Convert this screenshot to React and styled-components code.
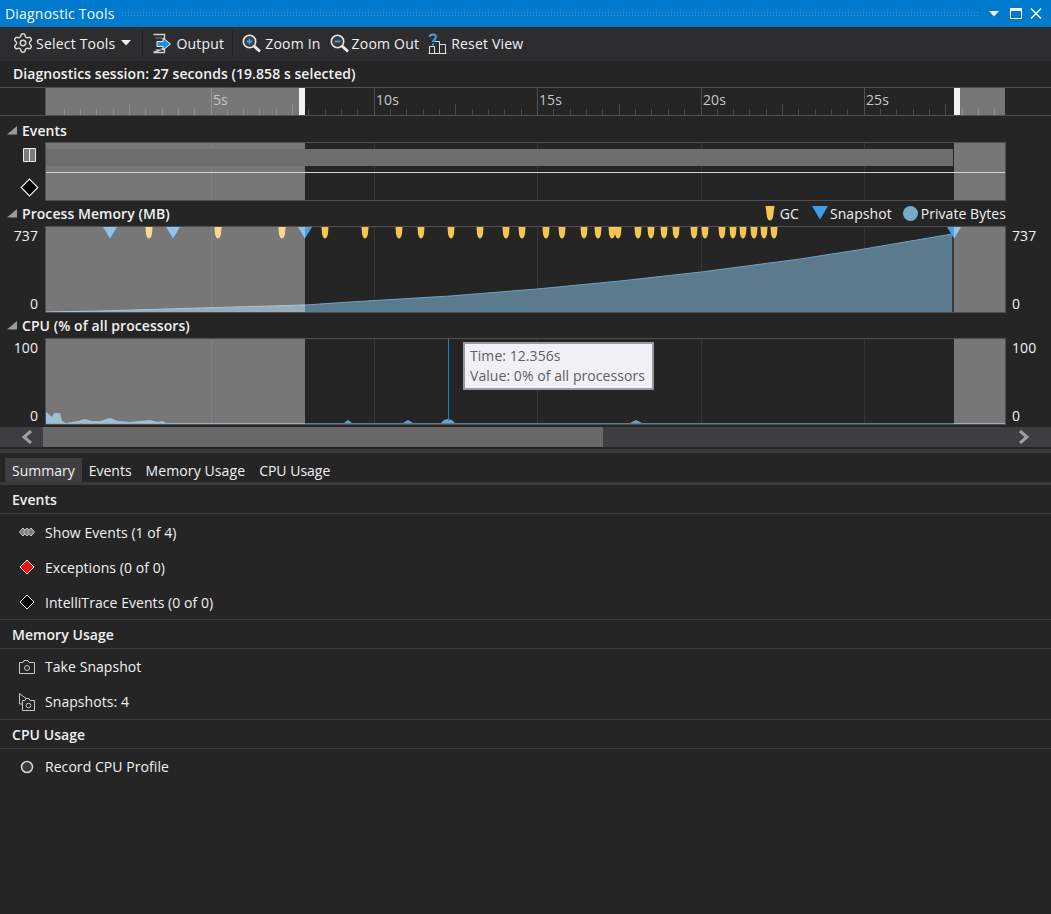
import React from 'react';
import styled, { createGlobalStyle } from 'styled-components';
import { Settings } from 'lucide-react';

const FONT = '"Open Sans", "Noto Sans", sans-serif';
const majors = [211.5, 374.5, 537.5, 701.5, 864.5];
const gcMarks = [149, 218, 282, 325, 365, 399, 421, 451, 480, 506, 522, 546, 562, 584, 598, 612, 618, 638, 651, 664, 676, 694, 705, 722, 733, 743, 754, 764, 774];
const snapMarks = [110, 173, 305, 954];

const GlobalStyle = createGlobalStyle`
  html, body { margin: 0; padding: 0; background: #252526; }
  body { font-family: ${FONT}; font-size: 14px; color: #f1f1f1; letter-spacing: 0.06px; }
`;

const Window = styled.div`
  width: 1051px;
  height: 914px;
  overflow: hidden;
  background: #252526;
`;

const TitleBar = styled.div`
  height: 27px;
  background: #007acc;
  display: flex;
  align-items: center;
  padding: 0 9px 0 5px;
  color: #f4f9fd;
  letter-spacing: 0.2px;
`;

const Grip = styled.div`
  flex: 1;
  height: 6px;
  margin: 0 11px 0 6px;
  background-image: radial-gradient(#3a9ad9 0.8px, transparent 1px);
  background-size: 3px 3px;
`;

const TitleButtons = styled.div`
  display: flex;
  align-items: center;
  gap: 8px;
`;

const MenuCaret = styled.span`
  display: flex;
  margin-left: ${p => p.$before}px;
  margin-right: ${p => p.$after || 0}px;
`;

const Toolbar = styled.div`
  height: 34px;
  box-sizing: border-box;
  background: #2d2d30;
  display: flex;
  align-items: center;
  padding: 0 0 2px 13px;
  letter-spacing: 0.2px;
`;

const ToolButton = styled.div`
  display: flex;
  align-items: center;
  gap: ${p => p.$gap || 4}px;
  margin-right: ${p => p.$after || 0}px;
  white-space: nowrap;
`;

const GearIcon = styled(Settings)`
  margin: 0 -1.5px;
  flex: none;
`;

const ToolSep = styled.div`
  width: 1px;
  height: 27px;
  background: #222224;
  margin-right: ${p => p.$after}px;
`;

const SessionRow = styled.div`
  height: 26px;
  box-sizing: border-box;
  padding: 0 0 2px 13px;
  display: flex;
  align-items: center;
  font-weight: 600;
`;

const ChartRow = styled.div`
  display: grid;
  grid-template-columns: 45px 961px 45px;
  height: ${p => p.$height}px;
`;

const RulerRow = styled(ChartRow)`
  box-sizing: border-box;
  border-top: 1px solid #505052;
  border-bottom: 1px solid #505052;
`;

const Frame = styled.div`
  position: relative;
  border: 1px solid #505052;
  background: #252526;
`;

const Plot = styled.svg`
  display: block;
  width: 100%;
  height: 100%;
`;

const TickLabel = styled.text`
  font-family: ${FONT};
  font-size: 14px;
  fill: #c8c8c8;
`;

const TrackHeader = styled.div`
  height: ${p => p.$height}px;
  box-sizing: border-box;
  display: flex;
  align-items: center;
  padding: ${p => Math.max(p.$shift, 0)}px 45px ${p => Math.max(-p.$shift, 0)}px 7px;
  gap: 4px;
`;

const TrackTitle = styled.span`
  font-weight: 600;
  flex: 1;
`;

const Legend = styled.div`
  display: flex;
  align-items: center;
`;

const LegendItem = styled.div`
  display: flex;
  align-items: center;
  gap: ${p => p.$gap}px;
  margin-left: ${p => p.$before || 0}px;
`;

const AxisColumn = styled.div`
  display: flex;
  flex-direction: column;
  justify-content: space-between;
  align-items: ${p => (p.$right ? 'flex-start' : 'flex-end')};
  padding: 1px ${p => (p.$right ? 0 : 7)}px 0 ${p => (p.$right ? 6 : 0)}px;
  height: 100%;
  box-sizing: border-box;
  line-height: 18px;
`;

const IconColumn = styled.div`
  display: flex;
  flex-direction: column;
  justify-content: space-between;
  align-items: center;
  padding: 6px 7px 4px 20px;
`;

const Tooltip = styled.div`
  position: absolute;
  left: 417px;
  top: 3px;
  width: 191px;
  height: 48px;
  box-sizing: border-box;
  border: 2px solid #9a9a9e;
  background: #f0f0f7;
  color: #5f5f5f;
  padding: 2px 5px;
  line-height: 20px;
  white-space: nowrap;
`;

const ScrollBar = styled.div`
  margin-top: 2px;
  height: 20px;
  background: #3e3e42;
  display: flex;
  align-items: center;
  justify-content: space-between;
  position: relative;
  padding: 0 21px;
`;

const ScrollThumb = styled.div`
  position: absolute;
  left: 43px;
  top: 0;
  bottom: 0;
  width: 560px;
  background: #686868;
`;

const Splitter = styled.div`
  height: 4px;
  margin-top: 2px;
  background: #3a3a3d;
`;

const TabStrip = styled.div`
  display: flex;
  align-items: stretch;
  height: 24px;
  margin-top: 5px;
  padding-left: 5px;
  border-bottom: 3px solid #3a3a3d;
  letter-spacing: 0;
`;

const Tab = styled.div`
  padding: 0 7px;
  display: flex;
  align-items: center;
  background: ${p => (p.$active ? '#3e3e40' : 'transparent')};
  letter-spacing: ${p => p.$track || 0}px;
`;

const SectionHeader = styled.div`
  height: 29px;
  display: flex;
  align-items: center;
  padding-left: 12px;
  font-weight: 600;
  box-sizing: border-box;
  border-bottom: 1px solid #3f3f42;
`;

const ActionRow = styled.div`
  height: 35px;
  box-sizing: border-box;
  padding: ${p => (p.$low ? 1 : 0)}px 0 0 19px;
  display: flex;
  align-items: center;
  gap: 10px;
`;

const ActionList = styled.div`
  border-bottom: ${p => (p.$last ? 'none' : '1px solid #3f3f42')};
`;

const IconBox = styled.svg`
  flex: none;
  display: block;
`;

const Caret = () => (
  <IconBox width="11" height="9" viewBox="0 0 11 9">
    <path d="M0 8.5 L10 0 V8.5 Z" fill="#9a9a9a" />
  </IconBox>
);

const DropArrow = () => (
  <IconBox width="10" height="6" viewBox="0 0 10 6">
    <path d="M0 0 H10 L5 5.5 Z" fill="#f1f1f1" />
  </IconBox>
);

const MaximizeIcon = () => (
  <IconBox width="12" height="11" viewBox="0 0 12 11">
    <path d="M.5 .5 H11.5 V10.5 H.5 Z" fill="none" stroke="#fff" />
    <rect x="0" y="0" width="12" height="3" fill="#fff" />
  </IconBox>
);

const CloseIcon = () => (
  <IconBox width="12" height="11" viewBox="0 0 12 11">
    <path d="M1 .5 L11 10.5 M11 .5 L1 10.5" stroke="#fff" strokeWidth="1.4" />
  </IconBox>
);

const OutputIcon = () => (
  <IconBox width="20" height="21" viewBox="0 0 20 21">
    <path d="M1.5 1.5 H12.5 V7 M12.5 15 V19.5 H1.5 Z" fill="#2d2d30" stroke="#d0d0d0" strokeWidth="1.4" />
    <path d="M3.5 5 H10 M3.5 16.5 H10" stroke="#8a8a8a" />
    <path d="M5 8.5 H11 V5 L18.5 11 L11 17 V13.5 H5 Z" fill="#1d8fdc" stroke="#f1f1f1" strokeWidth="1" />
  </IconBox>
);

const Magnifier = ({ minus }) => (
  <IconBox width="20" height="19" viewBox="0 0 20 19">
    <circle cx="7.5" cy="7.5" r="6.2" fill="#3b3b3e" stroke="#e8e8e8" strokeWidth="1.6" />
    <path d="M12 12 L18 17.5" stroke="#e8e8e8" strokeWidth="3" />
    <path d={minus ? 'M4.5 7.5 H10.5' : 'M4.5 7.5 H10.5 M7.5 4.5 V10.5'} stroke="#3f9ee0" strokeWidth="1.8" />
  </IconBox>
);

const ResetIcon = () => (
  <IconBox width="19" height="21" viewBox="0 0 19 21">
    <path d="M1.5 4 C2 0.5 8 0.5 8 4 C8 6.5 5 6.5 5 9" fill="none" stroke="#3f9ee0" strokeWidth="2" />
    <rect x="4" y="10.5" width="2" height="2" fill="#3f9ee0" />
    <path d="M1.5 20.5 V13.5 H6.5 V20.5 M6.5 8.5 H11.5 V20.5 M11.5 11.5 H17.5 V20.5 M.5 20.5 H18.5" fill="none" stroke="#e0e0e0" />
  </IconBox>
);

const PauseIcon = () => (
  <IconBox width="13" height="14" viewBox="0 0 13 14">
    <path d="M.5 .5 H12.5 V13.5 H.5 Z" fill="#7c7c7c" stroke="#eee" />
    <path d="M6.5 1 V13" stroke="#eee" />
  </IconBox>
);

const DiamondIcon = ({ size = 16, fill = '#000', line = 1 }) => (
  <IconBox width={size} height={size} viewBox="0 0 16 16">
    <path d="M8 1 L15 8 L8 15 L1 8 Z" fill={fill} stroke="#f0f0f0" strokeWidth={line} />
  </IconBox>
);

const ShowEventsIcon = () => (
  <IconBox width="16" height="16" viewBox="0 0 16 16">
    {[4, 8, 12].map(x => (
      <path key={x} d={`M${x} 4 L${x + 3.5} 8 L${x} 12 L${x - 3.5} 8 Z`} fill="#777" stroke="#cfcfcf" strokeWidth="1" />
    ))}
  </IconBox>
);

const CameraIcon = () => (
  <IconBox width="16" height="16" viewBox="0 0 16 16">
    <path d="M.5 3.5 H4 L5 1.5 H9 L10 3.5 H15.5 V14.5 H.5 Z" fill="none" stroke="#c8c8c8" />
    <circle cx="8" cy="9" r="2.5" fill="none" stroke="#c8c8c8" />
  </IconBox>
);

const SnapshotsIcon = () => (
  <IconBox width="16" height="18" viewBox="0 0 16 18">
    <path d="M.5 11 V.5 L7 5.5 M.5 11 H3" fill="none" stroke="#c8c8c8" />
    <path d="M3.5 7.5 H6 L7 5.5 H10 L11 7.5 H15.5 V17.5 H3.5 Z" fill="#252526" stroke="#c8c8c8" />
    <circle cx="9.5" cy="12.5" r="2.3" fill="none" stroke="#c8c8c8" />
  </IconBox>
);

const RecordIcon = () => (
  <IconBox width="16" height="16" viewBox="0 0 16 16">
    <circle cx="8" cy="8" r="5.5" fill="#3a3a3a" stroke="#d0d0d0" strokeWidth="1.6" />
  </IconBox>
);

const gcPath = x => `M${x - 3.5} 227 H${x + 3.5} L${x + 3} 234 Q${x + 1.8} 238.5 ${x} 238.5 Q${x - 1.8} 238.5 ${x - 3} 234 Z`;

const GcLegend = () => (
  <IconBox width="10" height="16" viewBox="0 0 10 16">
    <path d="M.5 1 H9.5 L8 12 Q7 15.5 5 15.5 Q3 15.5 2 12 Z" fill="#f6c453" />
  </IconBox>
);

const SnapshotLegend = () => (
  <IconBox width="16" height="14" viewBox="0 0 16 14">
    <path d="M0 0 H16 L8 13.5 Z" fill="#3f9eea" />
  </IconBox>
);

const BytesLegend = () => (
  <IconBox width="15" height="15" viewBox="0 0 15 15">
    <circle cx="7.5" cy="7.5" r="7.5" fill="#75abc9" />
  </IconBox>
);

// faint vertical grid shared by the three tracks
const GridLines = ({ top, bottom }) => majors.map(x => (
  <line key={x} x1={x} x2={x} y1={top} y2={bottom} stroke="#35353a" />
));

// grey bands outside of the selected range
const Shades = ({ top, bottom }) => (
  <>
    <rect x="46" y={top} width="259" height={bottom - top} fill="#fff" opacity="0.38" />
    <rect x="954" y={top} width="51" height={bottom - top} fill="#fff" opacity="0.38" />
  </>
);

const RulerPlot = () => {
  const ticks = [];
  for (let i = 0; i < 59; i++) {
    const x = Math.floor(47.7 + i * 16.33) + 0.5;
    const tall = i % 5 === 0;
    if (i % 10 !== 0) ticks.push(<line key={i} x1={x} x2={x} y1={tall ? 104 : 109} y2="115" stroke="#4a4a4c" />);
  }
  return (
    <Plot viewBox="45 88 961 27" preserveAspectRatio="none">
      {ticks}
      {majors.map(x => <line key={x} x1={x} x2={x} y1="88" y2="115" stroke="#505052" />)}
      <rect x="46" y="88" width="253" height="27" fill="#fff" opacity="0.38" />
      <rect x="960" y="88" width="45" height="27" fill="#fff" opacity="0.38" />
      <line x1="45.5" x2="45.5" y1="88" y2="115" stroke="#505052" />
      <rect x="299" y="88" width="6" height="27" fill="#f2f2f2" />
      <rect x="954" y="88" width="6" height="27" fill="#f2f2f2" />
      {majors.map((x, i) => <TickLabel key={x} x={x + 1.5} y="105">{(i + 1) * 5}s</TickLabel>)}
    </Plot>
  );
};

const EventsPlot = () => (
  <Plot viewBox="46 143 959 57" preserveAspectRatio="none">
    <GridLines top={143} bottom={200} />
    <rect x="46" y="149" width="907" height="17" fill="#6e6e6e" />
    <Shades top={143} bottom={200} />
    <rect x="46" y="149" width="259" height="17" fill="#6e6e6e" />
    <line x1="46" x2="1005" y1="172.5" y2="172.5" stroke="#d4d4d4" />
  </Plot>
);

const MemoryPlot = () => (
  <Plot viewBox="46 227 959 85" preserveAspectRatio="none">
    <GridLines top={227} bottom={312} />
    <path d="M46 312 L100 311 L200 308 L305 305 L350 302 L450 296 L537 289 L620 281 L701 272 L800 259 L864 249 L952 234 V312 Z" fill="#5b7a8e" />
    <path d="M46 312 L100 311 L200 308 L305 305 L350 302 L450 296 L537 289 L620 281 L701 272 L800 259 L864 249 L952 234" fill="none" stroke="#6fa3c2" />
    <line x1="953" x2="953" y1="234" y2="312" stroke="#38383a" strokeWidth="2" />
    {gcMarks.map(x => <path key={x} d={gcPath(x)} fill="#f6c453" />)}
    {snapMarks.map(x => <path key={x} d={`M${x - 7} 227 H${x + 7} L${x} 238.5 Z`} fill="#4aa0e6" />)}
    <Shades top={227} bottom={312} />
  </Plot>
);

const CpuPlot = () => (
  <Plot viewBox="46 339 959 85" preserveAspectRatio="none">
    <GridLines top={339} bottom={424} />
    <path
      d="M46 412 L52 417 L54 413 L60 413 L62 421 L66 423 L78 421 L85 419 L92 421 L100 421 L110 418 L118 421 L130 422 L150 420 L158 422 L162 421 L166 423 V424 H46 Z"
      fill="#6a9ab5"
    />
    <path d="M344 423 L348 420 L352 423 Z M403 423 L408 420 L413 423 Z M441 423 L444 420 L448 419 L452 420 L455 423 Z M630 423 L636 420 L642 423 Z" fill="#6aa5c4" />
    <line x1="46" x2="1005" y1="423.5" y2="423.5" stroke="#5c7f94" />
    <line x1="448.5" x2="448.5" y1="339" y2="421" stroke="#0f86d6" />
    <Shades top={339} bottom={424} />
  </Plot>
);

const ScrollArrow = ({ flip }) => (
  <IconBox width="12" height="14" viewBox="0 0 12 14">
    <path d={flip ? 'M2 1 L9 7 L2 13' : 'M10 1 L3 7 L10 13'} fill="none" stroke="#a0a0a0" strokeWidth="3" />
  </IconBox>
);

const App = () => {
  return (
    <Window>
      <GlobalStyle />
      <TitleBar>
        Diagnostic Tools
        <Grip />
        <TitleButtons>
          <MenuCaret $before={0} $after={3}><DropArrow /></MenuCaret>
          <MaximizeIcon />
          <CloseIcon />
        </TitleButtons>
      </TitleBar>

      <Toolbar>
        <ToolButton $after={11}>
          <GearIcon size={22} color="#d8d8d8" strokeWidth={1.6} />
          Select Tools
          <MenuCaret $before={2}><DropArrow /></MenuCaret>
        </ToolButton>
        <ToolSep $after={9} />
        <ToolButton $after={8}><OutputIcon />Output</ToolButton>
        <ToolSep $after={9} />
        <ToolButton $after={9} $gap={3}><Magnifier />Zoom In</ToolButton>
        <ToolButton $after={9} $gap={2}><Magnifier minus />Zoom Out</ToolButton>
        <ToolButton><ResetIcon />Reset View</ToolButton>
      </Toolbar>

      <SessionRow>Diagnostics session: 27 seconds (19.858 s selected)</SessionRow>

      <RulerRow $height={29}>
        <div />
        <RulerPlot />
        <div />
      </RulerRow>

      <TrackHeader $height={26} $shift={3}>
        <Caret />
        <TrackTitle>Events</TrackTitle>
      </TrackHeader>
      <ChartRow $height={59}>
        <IconColumn>
          <PauseIcon />
          <DiamondIcon size={19} />
        </IconColumn>
        <Frame><EventsPlot /></Frame>
        <div />
      </ChartRow>

      <TrackHeader $height={25} $shift={-1}>
        <Caret />
        <TrackTitle>Process Memory (MB)</TrackTitle>
        <Legend>
          <LegendItem $gap={5}><GcLegend />GC</LegendItem>
          <LegendItem $gap={2} $before={13}><SnapshotLegend />Snapshot</LegendItem>
          <LegendItem $gap={3} $before={11}><BytesLegend />Private Bytes</LegendItem>
        </Legend>
      </TrackHeader>
      <ChartRow $height={87}>
        <AxisColumn><span>737</span><span>0</span></AxisColumn>
        <Frame><MemoryPlot /></Frame>
        <AxisColumn $right><span>737</span><span>0</span></AxisColumn>
      </ChartRow>

      <TrackHeader $height={25} $shift={0}>
        <Caret />
        <TrackTitle>CPU (% of all processors)</TrackTitle>
      </TrackHeader>
      <ChartRow $height={87}>
        <AxisColumn><span>100</span><span>0</span></AxisColumn>
        <Frame>
          <CpuPlot />
          <Tooltip>
            Time: 12.356s<br />
            Value: 0% of all processors
          </Tooltip>
        </Frame>
        <AxisColumn $right><span>100</span><span>0</span></AxisColumn>
      </ChartRow>

      <ScrollBar>
        <ScrollThumb />
        <ScrollArrow />
        <ScrollArrow flip />
      </ScrollBar>
      <Splitter />

      <TabStrip>
        <Tab $active>Summary</Tab>
        <Tab>Events</Tab>
        <Tab $track={0.1}>Memory Usage</Tab>
        <Tab>CPU Usage</Tab>
      </TabStrip>

      <SectionHeader>Events</SectionHeader>
      <ActionList>
        <ActionRow $low><ShowEventsIcon />Show Events (1 of 4)</ActionRow>
        <ActionRow $low><DiamondIcon fill="#f01010" />Exceptions (0 of 0)</ActionRow>
        <ActionRow $low><DiamondIcon />IntelliTrace Events (0 of 0)</ActionRow>
      </ActionList>

      <SectionHeader>Memory Usage</SectionHeader>
      <ActionList>
        <ActionRow><CameraIcon />Take Snapshot</ActionRow>
        <ActionRow><SnapshotsIcon />Snapshots: 4</ActionRow>
      </ActionList>

      <SectionHeader>CPU Usage</SectionHeader>
      <ActionList $last>
        <ActionRow><RecordIcon />Record CPU Profile</ActionRow>
      </ActionList>
    </Window>
  );
};

export default App;
